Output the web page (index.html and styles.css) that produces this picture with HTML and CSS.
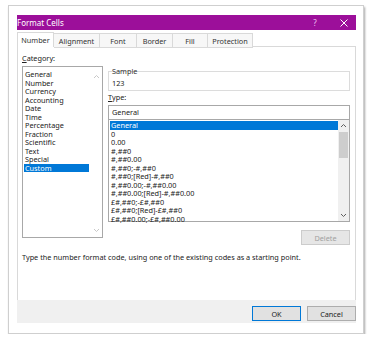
FILE: index.html
```html
<!DOCTYPE html>
<html>
<head>
<meta charset="utf-8">
<link rel="stylesheet" href="styles.css">
</head>
<body>
<div class="window">
  <div class="titlebar">
    <span class="title">Format Cells</span>
    <span class="tbtn q">?</span>
    <span class="tbtn x">
      <svg width="8" height="8" viewBox="0 0 8 8"><path d="M0.5 0.5L7.5 7.5M7.5 0.5L0.5 7.5" stroke="#fff" stroke-width="1"/></svg>
    </span>
  </div>
  <div class="tabs">
    <div class="tab active w1">Number</div>
    <div class="tab w2">Alignment</div>
    <div class="tab w3">Font</div>
    <div class="tab w4">Border</div>
    <div class="tab w5">Fill</div>
    <div class="tab w6">Protection</div>
    <div class="tab-rest"></div>
  </div>
  <div class="panel">
    <div class="cols">
      <div class="leftcol">
        <div class="label"><u>C</u>ategory:</div>
        <div class="catlist">
          <div class="items">
            <div class="item">General</div>
            <div class="item">Number</div>
            <div class="item">Currency</div>
            <div class="item">Accounting</div>
            <div class="item">Date</div>
            <div class="item">Time</div>
            <div class="item">Percentage</div>
            <div class="item">Fraction</div>
            <div class="item">Scientific</div>
            <div class="item">Text</div>
            <div class="item">Special</div>
            <div class="item sel">Custom</div>
          </div>
          <div class="catscroll">
            <svg width="7" height="5" viewBox="0 0 7 5"><path d="M1 4L3.5 1.5L6 4" stroke="#c8c8c8" fill="none" stroke-width="1"/></svg>
            <svg width="7" height="5" viewBox="0 0 7 5"><path d="M1 1L3.5 3.5L6 1" stroke="#c8c8c8" fill="none" stroke-width="1"/></svg>
          </div>
        </div>
      </div>
      <div class="rightcol">
        <div class="sample">
          <div class="legend">Sample</div>
          <div class="sampleval">123</div>
        </div>
        <div class="label typelabel"><u>T</u>ype:</div>
        <div class="typeinput">General</div>
        <div class="typelist">
          <div class="items">
            <div class="item sel">General</div>
            <div class="item">0</div>
            <div class="item">0.00</div>
            <div class="item">#,##0</div>
            <div class="item">#,##0.00</div>
            <div class="item">#,##0;-#,##0</div>
            <div class="item">#,##0;[Red]-#,##0</div>
            <div class="item">#,##0.00;-#,##0.00</div>
            <div class="item">#,##0.00;[Red]-#,##0.00</div>
            <div class="item">£#,##0;-£#,##0</div>
            <div class="item">£#,##0;[Red]-£#,##0</div>
            <div class="item">£#,##0.00;-£#,##0.00</div>
          </div>
          <div class="vscroll">
            <div class="arrow"><svg width="7" height="5" viewBox="0 0 7 5"><path d="M1 4L3.5 1.5L6 4" stroke="#606060" fill="none" stroke-width="1"/></svg></div>
            <div class="track"><div class="thumb"></div></div>
            <div class="arrow"><svg width="7" height="5" viewBox="0 0 7 5"><path d="M1 1L3.5 3.5L6 1" stroke="#606060" fill="none" stroke-width="1"/></svg></div>
          </div>
        </div>
        <div class="delrow"><div class="btn disabled">Delete</div></div>
      </div>
    </div>
    <div class="hint">Type the number format code, using one of the existing codes as a starting point.</div>
  </div>
  <div class="footer">
    <div class="btn ok">OK</div>
    <div class="btn">Cancel</div>
  </div>
</div>
</body>
</html>
```
FILE: styles.css
```css
* { box-sizing: border-box; }
html, body { margin: 0; padding: 0; background: #fff; }
body {
  font-family: "Noto Sans", "Open Sans", sans-serif;
  font-size: 7.3px;
  color: #222;
}
.window {
  margin: 5px 0 0 8px;
  width: 356px;
  height: 329px;
  border: 1px solid #cfcfcf;
  box-shadow: 1px 2px 2px rgba(0,0,0,0.35);
  padding: 9px 7px 10px 8px;
  background: #fff;
  display: flex;
  flex-direction: column;
}
.titlebar {
  height: 15px;
  background: #9c0f9a;
  color: #fff;
  display: flex;
  align-items: center;
  font-size: 8px;
}
.title { flex: 1; }
.tbtn { display: flex; align-items: center; justify-content: center; }
.tbtn.q { width: 12px; margin-right: 18px; color: #f0c0f0; }
.tbtn.x { width: 10px; margin-right: 7px; }
.tabs {
  margin-top: 2px;
  height: 15px;
  display: flex;
}
.tab {
  height: 15px;
  border: 1px solid #d9d9d9;
  border-left: none;
  background: #f7f7f7;
  display: flex;
  align-items: center;
  justify-content: center;
  color: #333;
  margin-top: 1px;
}
.tab.active {
  background: #fff;
  border-left: 1px solid #d9d9d9;
  border-bottom: none;
  margin-top: 0;
  height: 15px;
}
.tab-rest { flex: 1; border-bottom: 1px solid #d9d9d9; }
.w1 { width: 37px; }
.w2 { width: 46px; }
.w3 { width: 37px; }
.w4 { width: 36px; }
.w5 { width: 35px; }
.w6 { width: 45px; }
.panel {
  flex: 1;
  border-left: 1px solid #d9d9d9;
  border-right: 1px solid #d9d9d9;
  padding: 6px 5px 0 4px;
  display: flex;
  flex-direction: column;
}
.cols { display: flex; gap: 5px; }
.leftcol { width: 81px; }
.label { height: 13px; line-height: 10px; color: #222; }
.catlist {
  height: 172px;
  border: 1px solid #a8a8a8;
  display: flex;
  padding: 3px 0 0 1px;
}
.items { flex: 1; }
.item { height: 8.5px; line-height: 8.5px; padding-left: 1px; white-space: nowrap; color: #222; }
.item.sel { background: #0078d7; color: #fff; }
.catlist .item.sel { margin-right: 2px; }
.catscroll {
  width: 11px;
  display: flex;
  flex-direction: column;
  justify-content: space-between;
  align-items: center;
  padding: 4px 0 4px;
}
.rightcol { flex: 1; display: flex; flex-direction: column; }
.sample {
  margin-top: 18px;
  height: 20px;
  border: 1px solid #dcdcdc;
  padding-left: 3px;
}
.legend { margin-top: -5px; height: 8px; line-height: 8px; color: #333; }
.sampleval { margin-top: 4px; line-height: 8px; }
.typelabel { margin-top: 2px; height: 12px; line-height: 8px; }
.typeinput {
  height: 14px;
  border: 1px solid #a8a8a8;
  border-bottom: none;
  line-height: 12px;
  padding-left: 3px;
}
.typelist {
  height: 103px;
  border: 1px solid #a8a8a8;
  display: flex;
  padding: 1px 0 0 1px;
}
.vscroll {
  width: 11px;
  margin-top: -1px;
  display: flex;
  flex-direction: column;
  background: #f0f0f0;
}
.arrow { height: 11px; display: flex; align-items: center; justify-content: center; }
.track { flex: 1; }
.thumb { height: 26px; background: #cdcdcd; margin: 1px 1px 0; }
.delrow { display: flex; justify-content: flex-end; margin-top: 8px; }
.btn {
  width: 49px;
  height: 15px;
  border: 1px solid #adadad;
  background: #e1e1e1;
  display: flex;
  align-items: center;
  justify-content: center;
  color: #222;
}
.btn.disabled { color: #a0a0a0; border-color: #cccccc; background: #e6e6e6; }
.btn.ok { border-color: #0078d7; }
.hint { margin-top: 7px; line-height: 10px; color: #222; white-space: nowrap; }
.footer {
  height: 23px;
  background: #f0f0f0;
  display: flex;
  justify-content: flex-end;
  align-items: flex-end;
  gap: 6px;
  padding-bottom: 2px;
}
```
